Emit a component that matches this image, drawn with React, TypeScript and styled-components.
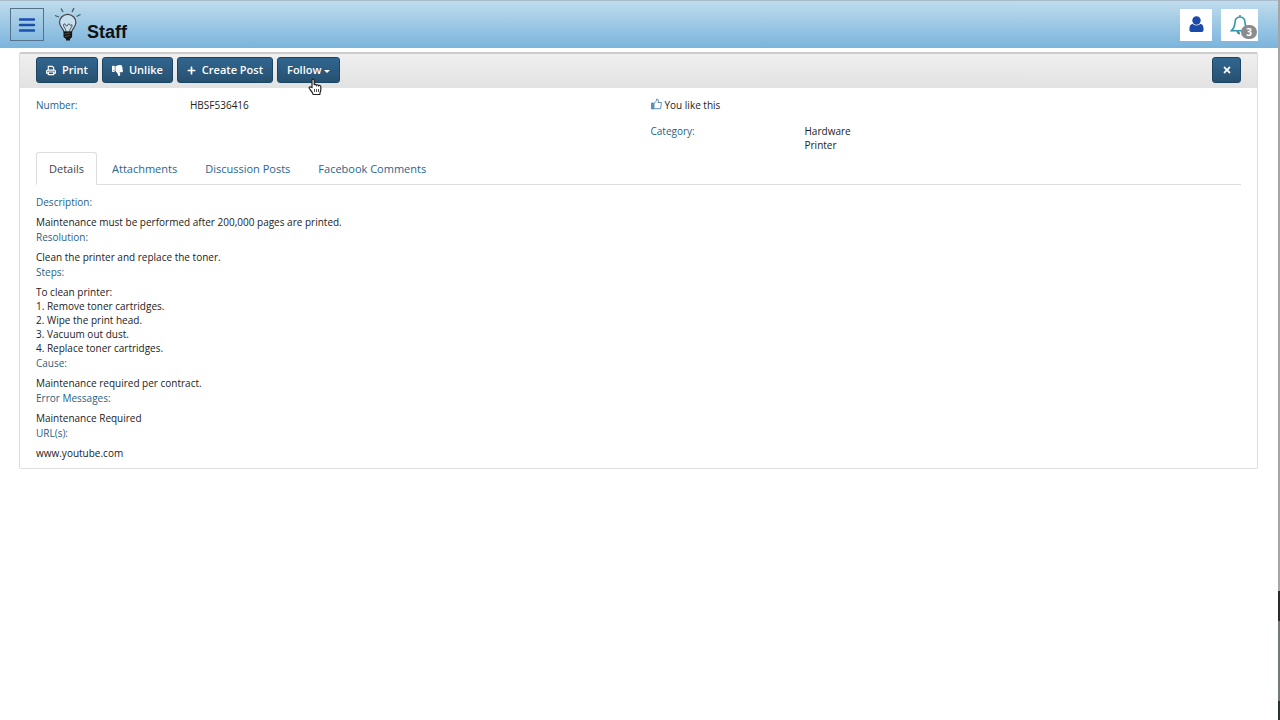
import React from "react";
import styled, { createGlobalStyle, css } from "styled-components";
import { FaThumbsDown, FaPlus, FaTimes } from "react-icons/fa";

const GlobalStyle = createGlobalStyle`
  *, *::before, *::after { box-sizing: border-box; }
  html, body { margin: 0; padding: 0; background: #fff; }
  body, button { font-family: "Open Sans", "Noto Sans", sans-serif; }
  body { font-size: 10px; line-height: 14px; color: #222; }
  button { cursor: pointer; }
`;

const Page = styled.div`
  display: flex;
  min-height: 100vh;
`;

const Main = styled.div`
  flex: 1;
  min-width: 0;
`;

const WindowEdge = styled.div`
  display: flex;
  flex-direction: column;
  width: 2px;
  background: #a6a6a6;
`;

const EdgeShade = styled.div<{ $tone: string; $size: number }>`
  flex: ${(p) => p.$size};
  background: ${(p) => p.$tone};
`;

const Header = styled.header`
  display: flex;
  align-items: center;
  height: 48px;
  padding: 0 20px 0 10px;
  border-top: 1px solid #a9bccb;
  background: linear-gradient(#bfdcec, #7ab4dc);
`;

const MenuButton = styled.button`
  display: flex;
  align-items: center;
  justify-content: center;
  width: 34px;
  height: 33px;
  padding: 0;
  border: 1px solid #55728a;
  background: transparent;
`;

const Brand = styled.div`
  display: flex;
  align-items: flex-end;
  flex: 1;
  gap: 5px;
  height: 34px;
  margin-left: 10px;
`;

const BrandName = styled.h1`
  margin: 0;
  font: bold 18px/20px "Liberation Sans", Arial, sans-serif;
  color: #111;
`;

const HeaderActions = styled.div`
  display: flex;
  gap: 9px;
`;

const HeaderButton = styled.button<{ $wide?: boolean }>`
  position: relative;
  display: flex;
  align-items: center;
  justify-content: center;
  width: ${(p) => (p.$wide ? 37 : 32)}px;
  height: 32px;
  padding: 0;
  border: 0;
  background: #fff;
`;

const Badge = styled.span`
  position: absolute;
  right: 1px;
  bottom: 2px;
  width: 16px;
  height: 14px;
  border-radius: 7px;
  background: #8c8c8c;
  color: #fff;
  font-size: 10px;
  font-weight: 700;
  line-height: 14px;
  text-align: center;
`;

const Panel = styled.main`
  margin: 4px 20px 0 19px;
  border: 1px solid #ddd;
  border-top: 2px solid #ccc;
  border-radius: 2px;
`;

const Toolbar = styled.div`
  display: flex;
  justify-content: space-between;
  align-items: flex-start;
  height: 34px;
  padding: 3px 16px;
  background: linear-gradient(#efefef, #e2e2e2);
`;

const ButtonGroup = styled.div`
  display: flex;
  gap: 4px;
`;

const ToolButton = styled.button<{ $square?: boolean }>`
  display: flex;
  align-items: center;
  justify-content: center;
  gap: 6px;
  width: ${(p) => (p.$square ? "29px" : "auto")};
  height: 26px;
  padding: ${(p) => (p.$square ? "0" : "0 9px")};
  border: 1px solid #1c4562;
  border-radius: 3px;
  background: linear-gradient(#316690, #27506f);
  color: #fff;
  font-size: 11px;
  font-weight: 600;
  line-height: 16px;
`;

const Caret = styled.span`
  width: 0;
  height: 0;
  margin: 3px 0 0 -3px;
  border: 3px solid transparent;
  border-top-color: #fff;
  border-bottom: 0;
`;

const CursorSpot = styled.span`
  position: relative;
  display: flex;
`;

const Cursor = styled.svg`
  position: absolute;
  left: 31px;
  top: 21px;
  pointer-events: none;
`;

const Body = styled.div`
  padding: 10px 16px 8px;
`;

const Summary = styled.div`
  display: grid;
  grid-template-columns: 1fr 1fr;
  gap: 24px;
`;

const SummaryColumn = styled.div`
  display: flex;
  flex-direction: column;
  gap: 12px;
`;

const Field = styled.div`
  display: flex;
`;

const FieldName = styled.span`
  width: 154px;
  color: #1f5f88;
  font-weight: 500;
`;

const Liked = styled.div`
  display: flex;
  gap: 3px;
`;

const Tabs = styled.div`
  display: flex;
  gap: 2px;
  height: 33px;
  border-bottom: 1px solid #ddd;
`;

const Tab = styled.button<{ $active?: boolean }>`
  height: 33px;
  padding: 0 12px;
  border: 1px solid transparent;
  border-radius: 3px 3px 0 0;
  background: transparent;
  color: #28668f;
  font-size: 11px;
  font-weight: 500;
  line-height: 16px;
  ${(p) =>
    p.$active &&
    css`
      border-color: #ddd #ddd #fff;
      background: #fff;
      color: #444;
    `}
`;

const Details = styled.dl`
  margin: 9px 0 0;
`;

const Term = styled.dt`
  padding-top: 1px;
  color: #1f5f88;
  font-weight: 500;
`;

const Value = styled.dd`
  margin: 6px 0 0;
`;

const MenuIcon = () => (
  <svg width="18" height="16" viewBox="0 0 18 16" stroke="#1b4fae" strokeWidth="2.4" strokeLinecap="round" aria-hidden="true">
    <path d="M2 2.500h14M2 8h14M2 13.500h14" />
  </svg>
);

const BulbLogo = () => (
  <svg width="28" height="36" viewBox="0 0 28 36" fill="none" stroke="#444" aria-hidden="true">
    <path d="M7 2.500l2 3.500M20 2l-2 4M1 9.500l4 1.500M26.500 8.500l-4 2" stroke="#46586a" strokeWidth="1.300" />
    <path d="M10 26c-.3-3-4.500-5-4.500-9.500a8.200 8.200 0 0 1 16.400 0C21.900 21 17.900 23 17.600 26z" fill="#c6e0ef" strokeWidth="1.200" />
    <path d="M12 25.500c0-3-2.500-4-2.500-6.500 0-1.500 1.800-1.500 2.200 0s1.600 1.500 2.100 0 1.700-1.500 2.100 0 2.200-1.500 2.200 0c0 2.500-2.500 3.500-2.500 6.500" strokeWidth=".9" />
    <path d="M9.500 25.500h8.600V31L16 33v1.500h-4V33l-2.500-2z" fill="#151515" stroke="none" />
    <path d="M11 28l5-1M11 30.500l5-1" stroke="#666" strokeWidth=".7" />
  </svg>
);

const UserIcon = () => (
  <svg width="15" height="17" viewBox="0 0 15 17" fill="#1b4aa8" aria-hidden="true">
    <circle cx="7.500" cy="4.500" r="4.200" />
    <path d="M3.600 7.800C1.200 8.200.4 10.500.4 13.400c0 1.700 1 2.700 2.500 2.700h9.200c1.500 0 2.500-1 2.500-2.700 0-2.900-.8-5.200-3.200-5.600-1 1-2.400 1.600-3.900 1.600s-2.900-.6-3.900-1.600z" />
  </svg>
);

const BellIcon = () => (
  <svg width="20" height="22" viewBox="0 0 20 22" fill="none" stroke="#3594ac" strokeWidth="1.600" aria-hidden="true">
    <path d="M10 1v2M10 3c-3.800 0-5 3-5.100 6-.2 4-1.400 5.900-3.400 7.700h17c-2-1.800-3.200-3.700-3.400-7.700-.1-3-1.300-6-5.100-6z" />
    <path d="M7.500 17c.3 1.700 1.200 2.500 2.500 2.500" strokeWidth="2" />
  </svg>
);

const PrintIcon = () => (
  <svg width="10" height="11" viewBox="0 0 13 13" preserveAspectRatio="xMidYMid meet" fill="none" stroke="#fff" strokeWidth="1.500" aria-hidden="true">
    <path d="M3 6V1.200h5.200L10 3v3" />
    <path d="M3 10H.8V7.500C.8 6.500 1.400 6 2.300 6h8.400c.9 0 1.500.5 1.500 1.500V10H10" />
    <path d="M3 8.500h7v3.300H3z" />
  </svg>
);

const LikeIcon = () => (
  <svg width="11" height="12" viewBox="0 0 11 12" fill="none" stroke="#5b91b5" aria-hidden="true">
    <path d="M.5 5h2v6h-2z" fill="#5b91b5" />
    <path d="M3 5.500c1.500-1 2.500-2.500 2.700-4.500 1.700 0 2 1.600 1.300 3.500h3.300v1.800L9.500 10.700H3z" />
  </svg>
);

const details: { name: string; lines: string[] }[] = [
  { name: "Description:", lines: ["Maintenance must be performed after 200,000 pages are printed."] },
  { name: "Resolution:", lines: ["Clean the printer and replace the toner."] },
  {
    name: "Steps:",
    lines: [
      "To clean printer:",
      "1. Remove toner cartridges.",
      "2. Wipe the print head.",
      "3. Vacuum out dust.",
      "4. Replace toner cartridges.",
    ],
  },
  { name: "Cause:", lines: ["Maintenance required per contract."] },
  { name: "Error Messages:", lines: ["Maintenance Required"] },
  { name: "URL(s):", lines: ["www.youtube.com"] },
];

const tabs = ["Details", "Attachments", "Discussion Posts", "Facebook Comments"];

export default function App() {
  const [active, setActive] = React.useState(tabs[0]);
  return (
    <Page>
      <GlobalStyle />
      <Main>
        <Header>
          <MenuButton aria-label="Menu"><MenuIcon /></MenuButton>
          <Brand><BulbLogo /><BrandName>Staff</BrandName></Brand>
          <HeaderActions>
            <HeaderButton aria-label="Account"><UserIcon /></HeaderButton>
            <HeaderButton $wide aria-label="Notifications"><BellIcon /><Badge>3</Badge></HeaderButton>
          </HeaderActions>
        </Header>
        <Panel>
          <Toolbar>
            <ButtonGroup>
              <ToolButton><PrintIcon />Print</ToolButton>
              <ToolButton><FaThumbsDown size={11} />Unlike</ToolButton>
              <ToolButton><FaPlus size={9} />Create Post</ToolButton>
              <CursorSpot>
                <ToolButton>Follow <Caret /></ToolButton>
                <Cursor width="15" height="18" viewBox="0 0 15 18" aria-hidden="true">
                  <path d="M4 9.500V2.300c0-1.600 2.200-1.600 2.200 0V7c.3-1 2-1 2.200.3.500-.9 2-.7 2.200.5.700-.7 2.200-.4 2.200 1V12c0 1.500-1 2.500-1 4.500H5.200c-.3-2-2.600-4-3.900-6-.7-1.300.8-2.300 1.700-1.300z" fill="#fff" stroke="#222" strokeWidth="1.200" />
                  <path d="M6.500 11v3M8.500 11v3M10.500 11v3" stroke="#222" strokeWidth=".8" />
                </Cursor>
              </CursorSpot>
            </ButtonGroup>
            <ToolButton $square aria-label="Close"><FaTimes size={10} /></ToolButton>
          </Toolbar>
          <Body>
            <Summary>
              <Field><FieldName>Number:</FieldName>HBSF536416</Field>
              <SummaryColumn>
                <Liked><LikeIcon />You like this</Liked>
                <Field><FieldName>Category:</FieldName><span>Hardware<br />Printer</span></Field>
              </SummaryColumn>
            </Summary>
            <Tabs role="tablist">
              {tabs.map((t) => (
                <Tab key={t} role="tab" aria-selected={t === active} $active={t === active} onClick={() => setActive(t)}>
                  {t}
                </Tab>
              ))}
            </Tabs>
            <Details>
              {details.map((d) => (
                <React.Fragment key={d.name}>
                  <Term>{d.name}</Term>
                  <Value>{d.lines.map((l) => <div key={l}>{l}</div>)}</Value>
                </React.Fragment>
              ))}
            </Details>
          </Body>
        </Panel>
      </Main>
      <WindowEdge aria-hidden="true">
        <EdgeShade $tone="#a6a6a6" $size={591} />
        <EdgeShade $tone="#2b2b2b" $size={30} />
        <EdgeShade $tone="#6f7a79" $size={80} />
        <EdgeShade $tone="#2b3232" $size={19} />
      </WindowEdge>
    </Page>
  );
}
